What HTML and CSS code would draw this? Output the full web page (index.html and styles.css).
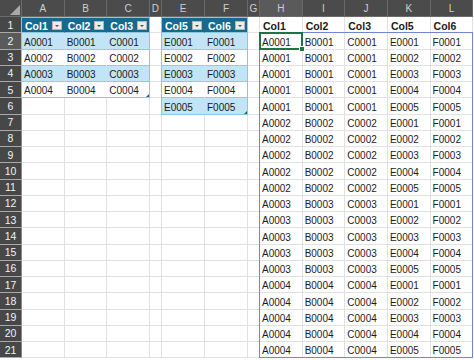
FILE: index.html
```html
<!DOCTYPE html>
<html>
<head>
<meta charset="utf-8">
<link rel="stylesheet" href="styles.css">
</head>
<body>
<div class="sheet">
  <div class="grid">
    <div class="corner"><svg width="22" height="17" viewBox="0 0 22 17"><polygon points="20,5 20,15 10,15" fill="#a8a8a8"/></svg></div>
    <div class="ch">A</div><div class="ch">B</div><div class="ch">C</div><div class="ch">D</div><div class="ch">E</div><div class="ch">F</div><div class="ch">G</div><div class="ch ch-sel">H</div><div class="ch">I</div><div class="ch">J</div><div class="ch">K</div><div class="ch">L</div>

    <div class="rh">1</div>
    <div class="c hd">Col1<span class="btn"></span></div><div class="c hd">Col2<span class="btn"></span></div><div class="c hd">Col3<span class="btn"></span></div>
    <div class="c"></div>
    <div class="c hd">Col5<span class="btn"></span></div><div class="c hd">Col6<span class="btn"></span></div>
    <div class="c"></div>
    <div class="c bo">Col1</div><div class="c bo">Col2</div><div class="c bo">Col3</div><div class="c bo">Col5</div><div class="c bo">Col6</div>

    <div class="rh rh-sel">2</div>
    <div class="c tb">A0001</div><div class="c tb">B0001</div><div class="c tb">C0001</div>
    <div class="c"></div>
    <div class="c tb">E0001</div><div class="c tb">F0001</div>
    <div class="c"></div>
    <div class="c">A0001</div><div class="c">B0001</div><div class="c">C0001</div><div class="c">E0001</div><div class="c">F0001</div>

    <div class="rh">3</div>
    <div class="c tw">A0002</div><div class="c tw">B0002</div><div class="c tw">C0002</div>
    <div class="c"></div>
    <div class="c tw">E0002</div><div class="c tw">F0002</div>
    <div class="c"></div>
    <div class="c">A0001</div><div class="c">B0001</div><div class="c">C0001</div><div class="c">E0002</div><div class="c">F0002</div>

    <div class="rh">4</div>
    <div class="c tb">A0003</div><div class="c tb">B0003</div><div class="c tb">C0003</div>
    <div class="c"></div>
    <div class="c tb">E0003</div><div class="c tb">F0003</div>
    <div class="c"></div>
    <div class="c">A0001</div><div class="c">B0001</div><div class="c">C0001</div><div class="c">E0003</div><div class="c">F0003</div>

    <div class="rh">5</div>
    <div class="c tw">A0004</div><div class="c tw">B0004</div><div class="c tw">C0004</div>
    <div class="c"></div>
    <div class="c tw">E0004</div><div class="c tw">F0004</div>
    <div class="c"></div>
    <div class="c">A0001</div><div class="c">B0001</div><div class="c">C0001</div><div class="c">E0004</div><div class="c">F0004</div>

    <div class="rh">6</div>
    <div class="c"></div><div class="c"></div><div class="c"></div>
    <div class="c"></div>
    <div class="c tb">E0005</div><div class="c tb">F0005</div>
    <div class="c"></div>
    <div class="c">A0001</div><div class="c">B0001</div><div class="c">C0001</div><div class="c">E0005</div><div class="c">F0005</div>

    <div class="rh">7</div>
    <div class="c"></div><div class="c"></div><div class="c"></div><div class="c"></div><div class="c"></div><div class="c"></div><div class="c"></div>
    <div class="c">A0002</div><div class="c">B0002</div><div class="c">C0002</div><div class="c">E0001</div><div class="c">F0001</div>

    <div class="rh">8</div>
    <div class="c"></div><div class="c"></div><div class="c"></div><div class="c"></div><div class="c"></div><div class="c"></div><div class="c"></div>
    <div class="c">A0002</div><div class="c">B0002</div><div class="c">C0002</div><div class="c">E0002</div><div class="c">F0002</div>

    <div class="rh">9</div>
    <div class="c"></div><div class="c"></div><div class="c"></div><div class="c"></div><div class="c"></div><div class="c"></div><div class="c"></div>
    <div class="c">A0002</div><div class="c">B0002</div><div class="c">C0002</div><div class="c">E0003</div><div class="c">F0003</div>

    <div class="rh">10</div>
    <div class="c"></div><div class="c"></div><div class="c"></div><div class="c"></div><div class="c"></div><div class="c"></div><div class="c"></div>
    <div class="c">A0002</div><div class="c">B0002</div><div class="c">C0002</div><div class="c">E0004</div><div class="c">F0004</div>

    <div class="rh">11</div>
    <div class="c"></div><div class="c"></div><div class="c"></div><div class="c"></div><div class="c"></div><div class="c"></div><div class="c"></div>
    <div class="c">A0002</div><div class="c">B0002</div><div class="c">C0002</div><div class="c">E0005</div><div class="c">F0005</div>

    <div class="rh">12</div>
    <div class="c"></div><div class="c"></div><div class="c"></div><div class="c"></div><div class="c"></div><div class="c"></div><div class="c"></div>
    <div class="c">A0003</div><div class="c">B0003</div><div class="c">C0003</div><div class="c">E0001</div><div class="c">F0001</div>

    <div class="rh">13</div>
    <div class="c"></div><div class="c"></div><div class="c"></div><div class="c"></div><div class="c"></div><div class="c"></div><div class="c"></div>
    <div class="c">A0003</div><div class="c">B0003</div><div class="c">C0003</div><div class="c">E0002</div><div class="c">F0002</div>

    <div class="rh">14</div>
    <div class="c"></div><div class="c"></div><div class="c"></div><div class="c"></div><div class="c"></div><div class="c"></div><div class="c"></div>
    <div class="c">A0003</div><div class="c">B0003</div><div class="c">C0003</div><div class="c">E0003</div><div class="c">F0003</div>

    <div class="rh">15</div>
    <div class="c"></div><div class="c"></div><div class="c"></div><div class="c"></div><div class="c"></div><div class="c"></div><div class="c"></div>
    <div class="c">A0003</div><div class="c">B0003</div><div class="c">C0003</div><div class="c">E0004</div><div class="c">F0004</div>

    <div class="rh">16</div>
    <div class="c"></div><div class="c"></div><div class="c"></div><div class="c"></div><div class="c"></div><div class="c"></div><div class="c"></div>
    <div class="c">A0003</div><div class="c">B0003</div><div class="c">C0003</div><div class="c">E0005</div><div class="c">F0005</div>

    <div class="rh">17</div>
    <div class="c"></div><div class="c"></div><div class="c"></div><div class="c"></div><div class="c"></div><div class="c"></div><div class="c"></div>
    <div class="c">A0004</div><div class="c">B0004</div><div class="c">C0004</div><div class="c">E0001</div><div class="c">F0001</div>

    <div class="rh">18</div>
    <div class="c"></div><div class="c"></div><div class="c"></div><div class="c"></div><div class="c"></div><div class="c"></div><div class="c"></div>
    <div class="c">A0004</div><div class="c">B0004</div><div class="c">C0004</div><div class="c">E0002</div><div class="c">F0002</div>

    <div class="rh">19</div>
    <div class="c"></div><div class="c"></div><div class="c"></div><div class="c"></div><div class="c"></div><div class="c"></div><div class="c"></div>
    <div class="c">A0004</div><div class="c">B0004</div><div class="c">C0004</div><div class="c">E0003</div><div class="c">F0003</div>

    <div class="rh">20</div>
    <div class="c"></div><div class="c"></div><div class="c"></div><div class="c"></div><div class="c"></div><div class="c"></div><div class="c"></div>
    <div class="c">A0004</div><div class="c">B0004</div><div class="c">C0004</div><div class="c">E0004</div><div class="c">F0004</div>

    <div class="rh">21</div>
    <div class="c"></div><div class="c"></div><div class="c"></div><div class="c"></div><div class="c"></div><div class="c"></div><div class="c"></div>
    <div class="c">A0004</div><div class="c">B0004</div><div class="c">C0004</div><div class="c">E0005</div><div class="c">F0005</div>
  </div>

  <div class="overlay">
    <div class="tbl tbl1"></div>
    <div class="tbl tbl2"></div>
    <div class="spill"></div>
    <div class="sel"></div>
  </div>
</div>
</body>
</html>
```

FILE: styles.css
```css
html, body {
  margin: 0;
  padding: 0;
  background: #ffffff;
}

.sheet {
  position: relative;
  width: 474px;
  height: 360px;
  overflow: hidden;
  background: #ffffff;
}

.grid,
.overlay {
  display: grid;
  grid-template-columns: 22px repeat(3, 42.67px) 12px repeat(2, 43px) 12px repeat(5, 42.67px);
  grid-template-rows: 17px repeat(21, 16.25px);
}

.overlay {
  position: absolute;
  inset: 0;
  pointer-events: none;
}

.grid > div {
  box-sizing: border-box;
  overflow: hidden;
  white-space: nowrap;
}

.corner {
  background: #4b4b4b;
  border-right: 1px solid #6a6a6a;
  border-bottom: 1px solid #6a6a6a;
}

.corner svg {
  display: block;
}

.ch {
  background: #4b4b4b;
  color: #cfcfcf;
  font-family: "Liberation Sans", Arial, sans-serif;
  font-size: 10px;
  display: flex;
  align-items: center;
  justify-content: center;
  border-right: 1px solid #686868;
  border-bottom: 1px solid #6a6a6a;
}

.ch-sel {
  background: #5a5a5a;
}

.rh {
  background: #474747;
  color: #f2f2f2;
  font-family: "Liberation Sans", Arial, sans-serif;
  font-size: 10.5px;
  display: flex;
  align-items: center;
  justify-content: center;
  border-right: 1px solid #8a8a8a;
  border-bottom: 1px solid #a9a9a9;
}

.rh-sel {
  background: #5a5a5a;
}

.c {
  font-family: "Liberation Sans", Arial, sans-serif;
  font-size: 10px;
  line-height: 12px;
  color: #1b1b1b;
  display: flex;
  align-items: flex-end;
  padding-left: 2px;
  border-right: 1px solid #e1e1e1;
  border-bottom: 1px solid #e1e1e1;
}

.bo {
  font-weight: bold;
  font-size: 10.5px;
  padding-left: 3px;
}

.hd {
  background: #176a8e;
  color: #ffffff;
  font-weight: bold;
  font-size: 10.5px;
  padding-left: 3px;
  border-right-color: #176a8e;
  border-bottom-color: #8cc8e6;
  position: relative;
}

.btn {
  position: absolute;
  right: 2px;
  bottom: 2px;
  width: 10px;
  height: 9px;
  box-sizing: border-box;
  background: #ececec;
  border: 1px solid #b5b5b5;
}

.btn::after {
  content: "";
  position: absolute;
  left: 2px;
  top: 3px;
  border-left: 2px solid transparent;
  border-right: 2px solid transparent;
  border-top: 2px solid #505050;
}

.tb {
  background: #c3e4f4;
  border-right-color: #c3e4f4;
  border-bottom-color: #8fcbe7;
}

.tw {
  background: #ffffff;
  border-right-color: #ffffff;
  border-bottom-color: #8fcbe7;
}

.tbl {
  border: 1px solid #8ac6e4;
  position: relative;
  margin-left: -1px;
}

.tbl::after {
  content: "";
  position: absolute;
  right: 0;
  bottom: 0;
  border-left: 3px solid transparent;
  border-bottom: 3px solid #1f5f8c;
}

.tbl1 {
  grid-column: 2 / 5;
  grid-row: 2 / 7;
}

.tbl2 {
  grid-column: 6 / 8;
  grid-row: 2 / 8;
}

.spill {
  grid-column: 9 / 14;
  grid-row: 3 / 23;
  border: 1px solid #7088d4;
  margin: -1px 0 0 -1px;
}

.sel {
  grid-column: 9 / 10;
  grid-row: 3 / 4;
  border: 2px solid #1f7245;
  margin: -1px 0 0 -1px;
  position: relative;
}

.sel::after {
  content: "";
  position: absolute;
  right: -4px;
  bottom: -4px;
  width: 4px;
  height: 4px;
  background: #1f7245;
  border: 1px solid #ffffff;
}
```
